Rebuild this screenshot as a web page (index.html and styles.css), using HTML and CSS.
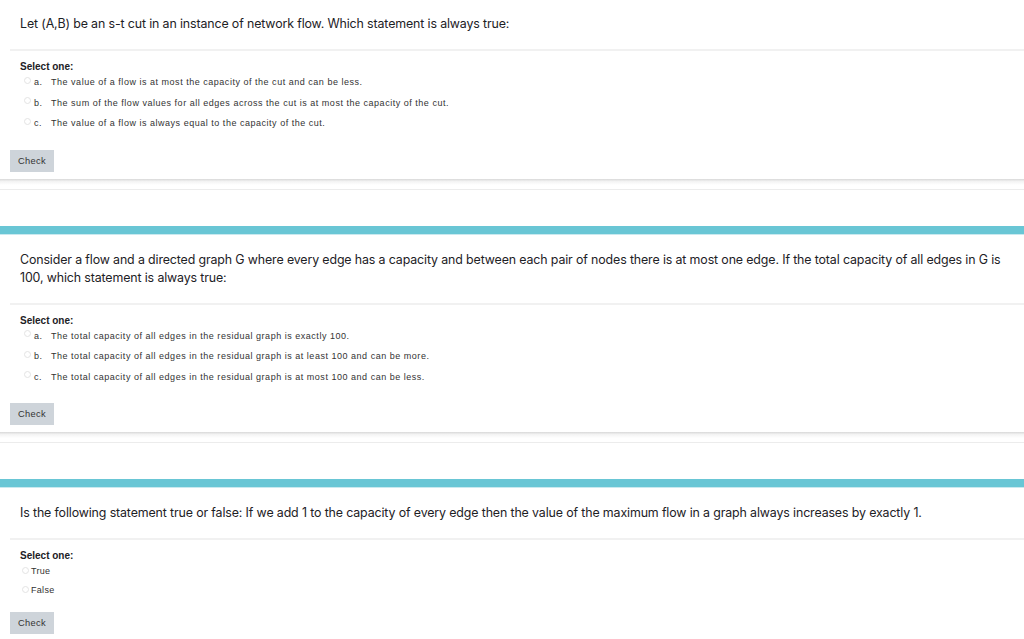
FILE: index.html
```html
<!DOCTYPE html>
<html>
<head>
<meta charset="utf-8">
<link rel="stylesheet" href="styles.css">
</head>
<body>
<div class="page">
  <section class="que first">
    <div class="qtext">Let (A,B) be an s-t cut in an instance of network flow. Which statement is always true:</div>
    <div class="ablock">
      <div class="prompt">Select one:</div>
      <div class="answer">
        <div class="opt"><span class="radio"></span><span class="num">a.</span><span class="lbl">The value of a flow is at most the capacity of the cut and can be less.</span></div>
        <div class="opt"><span class="radio"></span><span class="num">b.</span><span class="lbl">The sum of the flow values for all edges across the cut is at most the capacity of the cut.</span></div>
        <div class="opt"><span class="radio"></span><span class="num">c.</span><span class="lbl">The value of a flow is always equal to the capacity of the cut.</span></div>
      </div>
    </div>
    <div class="actions"><button class="check">Check</button></div>
  </section>
  <div class="shadow"></div>
  <div class="rule"></div>

  <section class="que">
    <div class="bar"></div>
    <div class="qtext">Consider a flow and a directed graph G where every edge has a capacity and between each pair of nodes there is at most one edge. If the total capacity of all edges in G is 100, which statement is always true:</div>
    <div class="ablock">
      <div class="prompt">Select one:</div>
      <div class="answer">
        <div class="opt"><span class="radio"></span><span class="num">a.</span><span class="lbl">The total capacity of all edges in the residual graph is exactly 100.</span></div>
        <div class="opt"><span class="radio"></span><span class="num">b.</span><span class="lbl">The total capacity of all edges in the residual graph is at least 100 and can be more.</span></div>
        <div class="opt"><span class="radio"></span><span class="num">c.</span><span class="lbl">The total capacity of all edges in the residual graph is at most 100 and can be less.</span></div>
      </div>
    </div>
    <div class="actions"><button class="check">Check</button></div>
  </section>
  <div class="shadow"></div>
  <div class="rule"></div>

  <section class="que">
    <div class="bar"></div>
    <div class="qtext">Is the following statement true or false: If we add 1 to the capacity of every edge then the value of the maximum flow in a graph always increases by exactly 1.</div>
    <div class="ablock">
      <div class="prompt">Select one:</div>
      <div class="answer tf">
        <div class="opt"><span class="radio"></span><span class="lbl">True</span></div>
        <div class="opt"><span class="radio"></span><span class="lbl">False</span></div>
      </div>
    </div>
    <div class="actions tf-actions"><button class="check">Check</button></div>
  </section>
</div>
</body>
</html>
```

FILE: styles.css
```css
html, body {
  margin: 0;
  padding: 0;
  background: #ffffff;
}

body {
  font-family: Inter, "Liberation Sans", sans-serif;
  color: #1d2125;
}

.page {
  display: flex;
  flex-direction: column;
}

.que {
  display: flex;
  flex-direction: column;
  margin-top: 36px;
}

.que.first {
  margin-top: 0;
  padding-top: 15px;
}

.bar {
  height: 8px;
  background: #69c6d5;
  border-bottom: 1px solid #c9e9ef;
  margin-bottom: 16px;
}

.qtext {
  font-size: 12.4px;
  letter-spacing: -0.13px;
  line-height: 18px;
  padding: 0 20px 16px 20px;
  color: #1d2125;
}

.ablock {
  margin-left: 10px;
  border-top: 2px solid #f1f1f1;
  padding: 10px 0 0 10px;
}

.prompt {
  font-family: "Liberation Sans", Arial, sans-serif;
  font-weight: bold;
  font-size: 10px;
  line-height: 12px;
  color: #1d2125;
}

.answer {
  display: flex;
  flex-direction: column;
  margin-top: -1px;
}

.opt {
  display: flex;
  align-items: center;
  height: 20.5px;
  font-family: "Liberation Sans", Arial, sans-serif;
  font-size: 9px;
  color: #333;
}

.radio {
  width: 5px;
  height: 5px;
  border: 1px solid #e3e3e3;
  border-radius: 50%;
  margin: -4px 3px 0 4px;
  flex: none;
}

.num {
  width: 17px;
  letter-spacing: 0.4px;
}

.lbl {
  letter-spacing: 0.52px;
}

.answer.tf .opt {
  height: 19px;
}

.answer.tf .radio {
  margin: 0 2px 0 2px;
}

.answer.tf .lbl {
  letter-spacing: 0.3px;
}

.actions {
  padding: 14px 0 7px 10px;
}

.tf-actions {
  padding-top: 11px;
}

.check {
  width: 44px;
  height: 22px;
  border: none;
  border-radius: 0;
  background: #ced4da;
  color: #333;
  font-family: "Liberation Sans", Arial, sans-serif;
  font-size: 9.3px;
  letter-spacing: 0.3px;
  padding: 0;
}

.shadow {
  height: 6px;
  background: linear-gradient(#d8d8d8, #f3f3f3 40%, #ffffff);
}

.rule {
  margin-top: 4px;
  height: 1px;
  background: #ececec;
}
```
